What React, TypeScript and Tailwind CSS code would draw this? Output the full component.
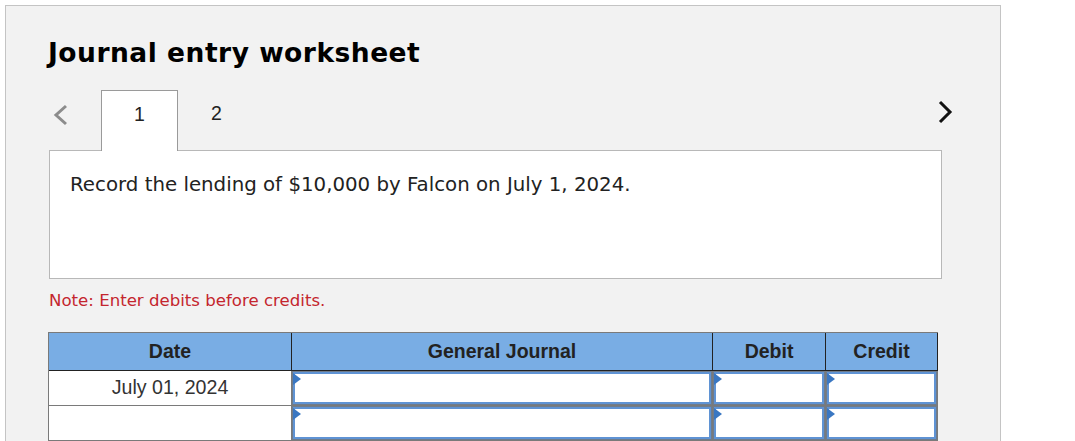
import React from "react";

const verdana = { fontFamily: '"DejaVu Sans", Verdana, sans-serif' };
const arial = { fontFamily: '"Liberation Sans", Arial, sans-serif' };

function InputCell({ w }: { w: string }) {
  return (
    <div className={`${w} h-full border-r border-[#7a7a7a] p-[1px]`}>
      <div className="relative h-full w-full border-2 border-[#5f93d4] bg-white shadow-[0_0_0_1px_#6f7c8c]">
        <div className="absolute left-[-2px] top-[-1px] h-0 w-0 border-y-[6px] border-l-[8px] border-y-transparent border-l-[#3a77c2]" />
      </div>
    </div>
  );
}

function Row({ date }: { date?: string }) {
  return (
    <div className="flex h-[35px] border-b border-[#7a7a7a]">
      <div
        className="flex w-[243px] items-center justify-center border-r border-[#7a7a7a] bg-white text-[19.6px] text-[#333]"
        style={arial}
      >
        {date}
      </div>
      <InputCell w="w-[421px]" />
      <InputCell w="w-[113px]" />
      <InputCell w="w-[112px]" />
    </div>
  );
}

export default function App() {
  return (
    <div className="h-[441px] w-[1075px] overflow-hidden bg-white pl-[5px] pt-[5px]">
      <div className="h-[520px] w-[996px] border border-[#c4c4c4] bg-[#f2f2f2] pl-[43px] pr-[58px] pt-[31px]">
        <h1
          className="-ml-px text-[26.5px] font-bold leading-[32px] tracking-[0.5px] text-black"
          style={verdana}
        >
          Journal entry worksheet
        </h1>

        <div className="relative z-10 mt-[21px] -mb-px flex h-[61px] w-[906px]">
          <div className="flex w-[52px] items-start justify-start pl-[3px] pt-[14px]">
            <svg width="17" height="22" viewBox="0 0 17 22">
              <path d="M14 2 L4 11 L14 20" fill="none" stroke="#8c8c8c" strokeWidth="3" />
            </svg>
          </div>
          <div
            className="w-[77px] border border-b-0 border-[#9a9a9a] bg-white pt-[11px] text-center text-[19.5px] leading-[24px] text-[#222]"
            style={arial}
          >
            1
          </div>
          <div className="w-[77px] pt-[11px] text-center text-[19.5px] leading-[24px] text-[#222]" style={arial}>
            2
          </div>
          <div className="flex-1" />
          <div className="flex w-[18px] items-start pt-[10px]">
            <svg width="16" height="24" viewBox="0 0 16 24">
              <path d="M3 2 L13 12 L3 22" fill="none" stroke="#111" strokeWidth="3" />
            </svg>
          </div>
        </div>

        <div className="h-[129px] w-[893px] border border-[#b8b8b8] bg-white pl-[20px] pt-[22px]">
          <p className="text-[19.8px] leading-[24px] text-[#222]" style={verdana}>
            Record the lending of $10,000 by Falcon on July 1, 2024.
          </p>
        </div>

        <p className="mt-[11px] text-[16.6px] leading-[21px] text-[#c4262e]" style={verdana}>
          Note: Enter debits before credits.
        </p>

        <div className="-ml-px mt-[21px] w-[890px] border-l border-t border-[#7a7a7a]">
          <div
            className="flex h-[38px] border-b border-[#222] bg-[#79ade4] text-[19.5px] font-bold text-[#222]"
            style={arial}
          >
            <div className="flex w-[243px] items-center justify-center border-r border-[#222]">Date</div>
            <div className="flex w-[421px] items-center justify-center border-r border-[#222]">General Journal</div>
            <div className="flex w-[113px] items-center justify-center border-r border-[#222]">Debit</div>
            <div className="flex w-[112px] items-center justify-center border-r border-[#222]">Credit</div>
          </div>
          <Row date="July 01, 2024" />
          <Row />
          <Row />
        </div>
      </div>
    </div>
  );
}
